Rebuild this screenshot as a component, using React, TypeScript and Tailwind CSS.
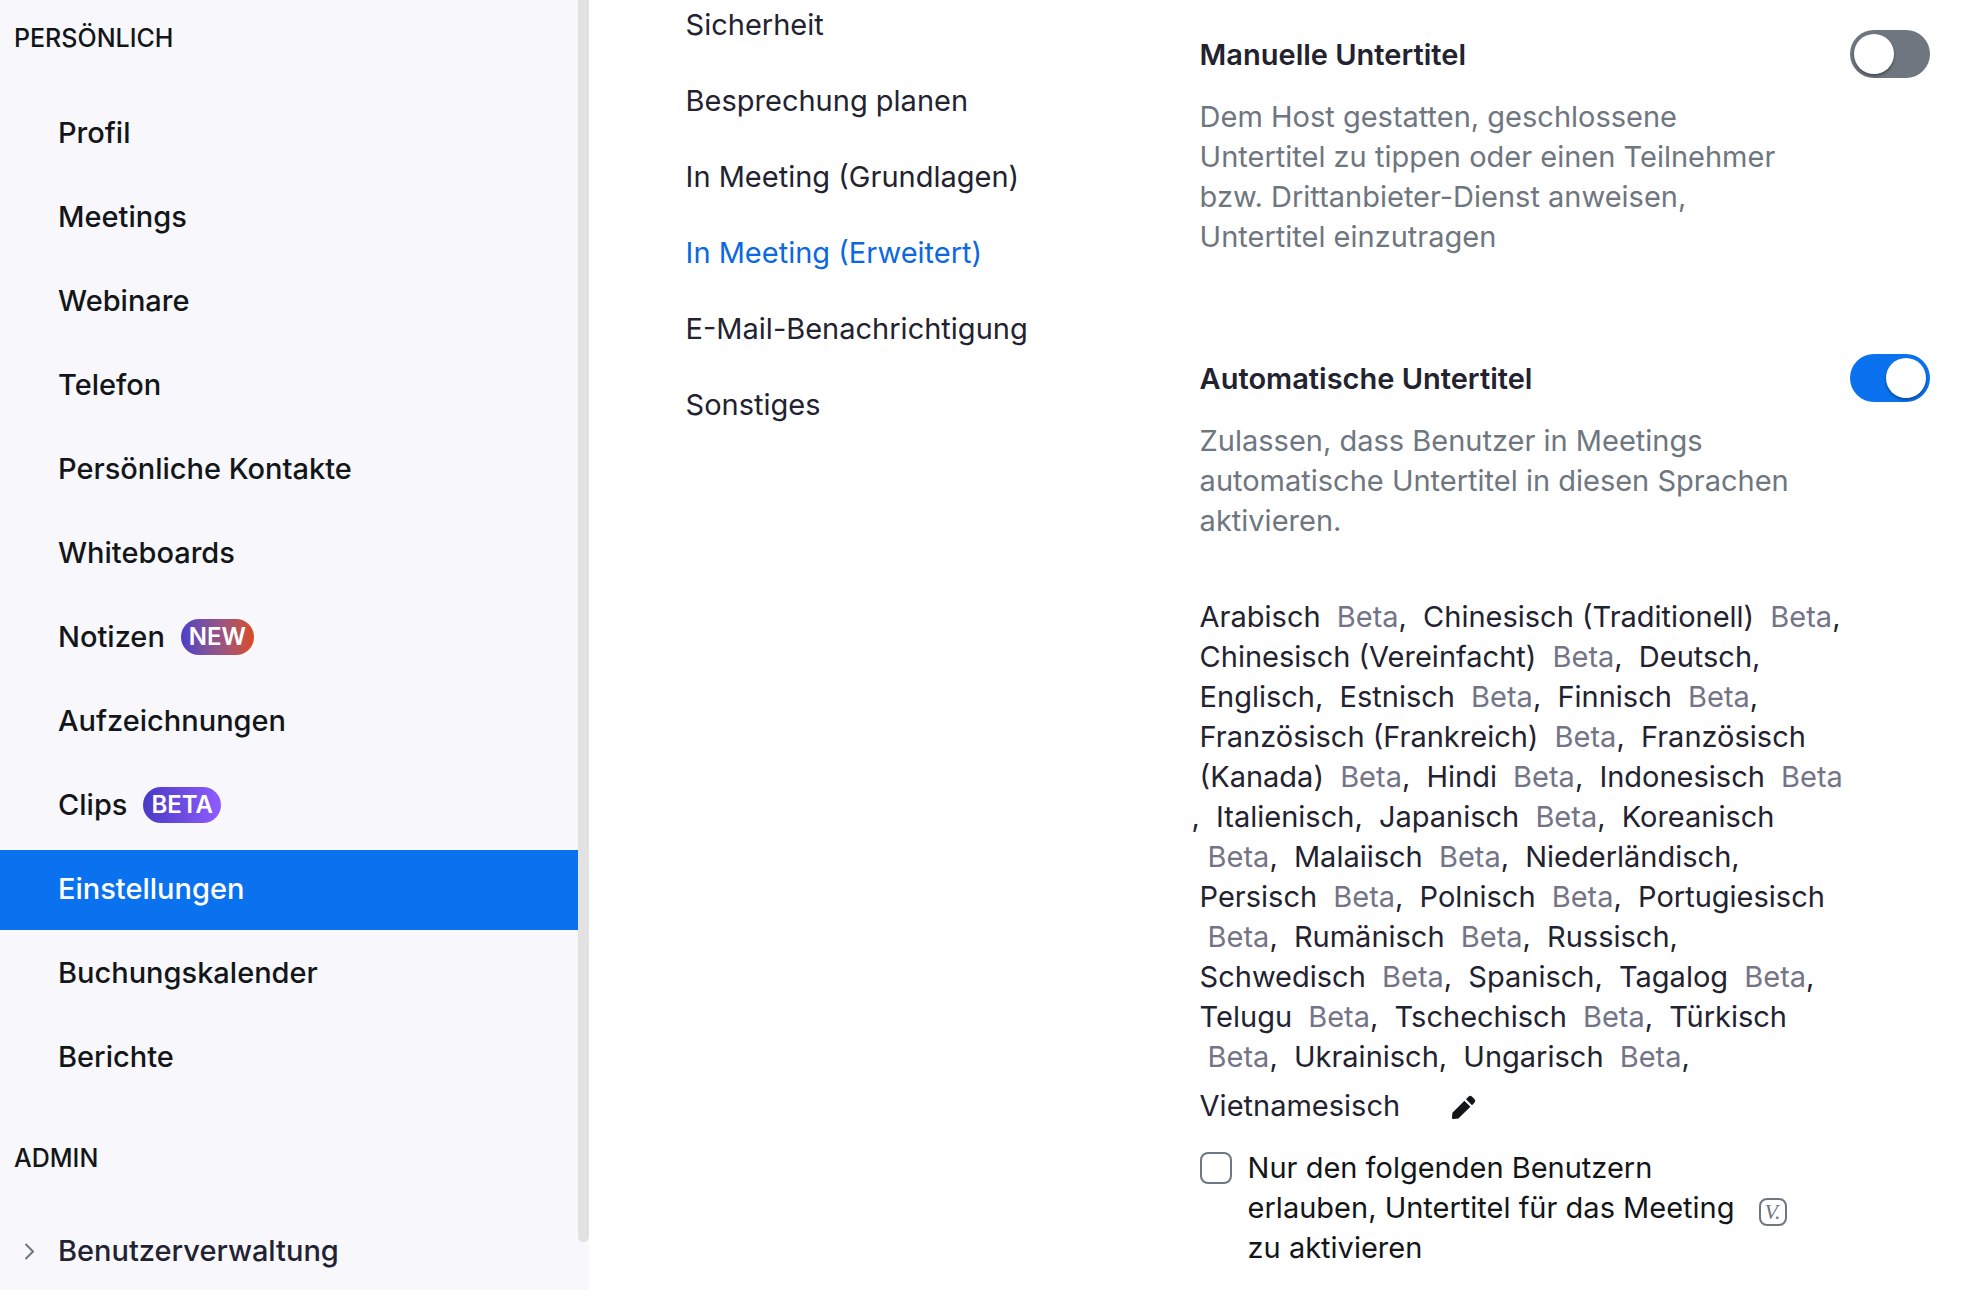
import React, { useState } from "react";
import clsx from "clsx";

interface NavItem {
  label: string;
  badge?: "new" | "beta";
}

interface Language {
  name: string;
  beta?: boolean;
}

const personalItems: NavItem[] = [
  { label: "Profil" },
  { label: "Meetings" },
  { label: "Webinare" },
  { label: "Telefon" },
  { label: "Persönliche Kontakte" },
  { label: "Whiteboards" },
  { label: "Notizen", badge: "new" },
  { label: "Aufzeichnungen" },
  { label: "Clips", badge: "beta" },
  { label: "Einstellungen" },
  { label: "Buchungskalender" },
  { label: "Berichte" },
];

const sections = [
  "Sicherheit",
  "Besprechung planen",
  "In Meeting (Grundlagen)",
  "In Meeting (Erweitert)",
  "E-Mail-Benachrichtigung",
  "Sonstiges",
];

const Badge: React.FC<{ kind: "new" | "beta" }> = ({ kind }) => (
  <span
    className={clsx(
      "ml-4 flex h-9 items-center rounded-full px-2 text-2xl font-semibold text-white",
      kind === "new"
        ? "bg-linear-to-r from-[#4f3cc9] to-[#d9481c]"
        : "bg-linear-to-r from-[#4a3ac4] to-[#8f5cff]"
    )}
  >
    {kind === "new" ? "NEW" : "BETA"}
  </span>
);

const Sidebar: React.FC = () => (
  <aside className="flex w-[30%] shrink-0 bg-[#f7f7fc] text-[#131619]">
    <nav className="min-w-0 flex-1 font-medium">
      <h2 className="px-3.5 pt-[18px] text-[25px] leading-10">PERSÖNLICH</h2>
      <ul className="mt-9 flex flex-col gap-1">
        {personalItems.map((item) => (
          <li key={item.label}>
            <a
              href="#"
              className={clsx(
                "flex h-20 items-center pb-0.5 pl-[58px]",
                item.label === "Einstellungen" && "bg-[#0b72ef] text-white"
              )}
            >
              {item.label}
              {item.badge && <Badge kind={item.badge} />}
            </a>
          </li>
        ))}
      </ul>
      <h2 className="mt-10 px-3.5 text-[25px] leading-10">ADMIN</h2>
      <button type="button" className="mt-9 flex h-[74px] w-full items-center text-[#222230]">
        <svg className="ml-6 mr-6 h-5 w-2.5" viewBox="0 0 10 20" fill="none" stroke="#6e7680" strokeWidth="2">
          <path d="M1.5 3 9 10.5 1.5 18" />
        </svg>
        Benutzerverwaltung
      </button>
    </nav>
    <div className="w-[11px] pb-12">
      <div className="h-full rounded-b-full bg-[#e2e2e3]" />
    </div>
  </aside>
);

const Toggle: React.FC<{ id: string; on: boolean; onChange: (v: boolean) => void }> = ({ id, on, onChange }) => (
  <button
    type="button"
    role="switch"
    aria-checked={on}
    aria-labelledby={id}
    onClick={() => onChange(!on)}
    className={clsx(
      "flex h-12 w-20 shrink-0 items-center rounded-full px-1 transition-colors",
      on ? "justify-end bg-[#0b72ef]" : "justify-start bg-[#6e7680]"
    )}
  >
    <span className="h-10 w-10 rounded-full bg-white shadow-[0_2px_3px_rgba(0,0,0,0.35)]" />
  </button>
);

const languageLines: Language[][] = [
  [{ name: "Arabisch", beta: true }, { name: "Chinesisch (Traditionell)", beta: true }],
  [{ name: "Chinesisch (Vereinfacht)", beta: true }, { name: "Deutsch" }],
  [{ name: "Englisch" }, { name: "Estnisch", beta: true }, { name: "Finnisch", beta: true }],
];

const Beta = () => <span className="ml-2 text-[#747487]">Beta</span>;

const Item: React.FC<Language> = ({ name, beta }) => (
  <span className="mr-2">
    {name}
    {beta && name && " "}
    {beta && <Beta />},
  </span>
);

const LanguageList: React.FC = () => (
  <div className="mt-14 whitespace-nowrap leading-10 text-[#222230]">
    {languageLines.map((line, i) => (
      <p key={i}>
        {line.map((lang) => (
          <React.Fragment key={lang.name}>
            <Item {...lang} />{" "}
          </React.Fragment>
        ))}
      </p>
    ))}
    <p><Item name="Französisch (Frankreich)" beta /> Französisch</p>
    <p><Item name="(Kanada)" beta /> <Item name="Hindi" beta /> Indonesisch <Beta /></p>
    <p><span className="-ml-2 mr-2">,</span> <Item name="Italienisch" /> <Item name="Japanisch" beta /> Koreanisch</p>
    <p><Item name="" beta /> <Item name="Malaiisch" beta /> <Item name="Niederländisch" /></p>
    <p><Item name="Persisch" beta /> <Item name="Polnisch" beta /> Portugiesisch</p>
    <p><Item name="" beta /> <Item name="Rumänisch" beta /> <Item name="Russisch" /></p>
    <p><Item name="Schwedisch" beta /> <Item name="Spanisch" /> <Item name="Tagalog" beta /></p>
    <p><Item name="Telugu" beta /> <Item name="Tschechisch" beta /> Türkisch</p>
    <p><Item name="" beta /> <Item name="Ukrainisch" /> <Item name="Ungarisch" beta /></p>
    <div className="mt-[9px] flex items-center">
      Vietnamesisch
      <button type="button" aria-label="Bearbeiten" className="ml-[50px]">
        <svg className="h-7 w-7" viewBox="0 0 28 28" fill="#131619">
          <path d="M2.4 20.8 14.4 8.8l6 6L8.4 26.4 3.4 27a1.2 1.2 0 0 1-1.4-1.4z" />
          <path d="m16 7.2 2.4-2.4a2.6 2.6 0 0 1 3.7 0l2.3 2.3a2.6 2.6 0 0 1 0 3.7L22 13.2z" />
        </svg>
      </button>
    </div>
  </div>
);

export default function App() {
  const [manual, setManual] = useState(false);
  const [auto, setAuto] = useState(true);

  return (
    <div className="flex min-h-screen overflow-hidden bg-white font-[Inter,sans-serif] text-[29px] text-[#222230]">
      <Sidebar />
      <nav className="w-[611px] shrink-0 pl-[97px] pt-[5px]">
        <ul className="flex flex-col gap-9 leading-10">
          {sections.map((section) => (
            <li key={section}>
              <a href="#" className={clsx(section === "In Meeting (Erweitert)" && "text-[#0b68e0]")}>
                {section}
              </a>
            </li>
          ))}
        </ul>
      </nav>
      <main className="min-w-0 flex-1 pr-8 pt-[30px] leading-10">
        <section>
          <div className="flex items-center justify-between">
            <h3 id="manual" className="pt-0.5 font-semibold">Manuelle Untertitel</h3>
            <Toggle id="manual" on={manual} onChange={setManual} />
          </div>
          <p className="mt-[19px] text-[#6e7680]">
            Dem Host gestatten, geschlossene
            <br />
            Untertitel zu tippen oder einen Teilnehmer
            <br />
            bzw. Drittanbieter-Dienst anweisen,
            <br />
            Untertitel einzutragen
          </p>
        </section>
        <section className="mt-[97px]">
          <div className="flex items-center justify-between">
            <h3 id="auto" className="pt-0.5 font-semibold">Automatische Untertitel</h3>
            <Toggle id="auto" on={auto} onChange={setAuto} />
          </div>
          <p className="mt-[19px] text-[#6e7680]">
            Zulassen, dass Benutzer in Meetings
            <br />
            automatische Untertitel in diesen Sprachen
            <br />
            aktivieren.
          </p>
          <LanguageList />
          <div className="mt-[22px] flex items-start text-[#131619]">
            <input
              id="restrict"
              type="checkbox"
              className="mt-1 h-8 w-8 shrink-0 appearance-none rounded-lg border-2 border-[#6e7680] bg-white checked:bg-[#0b72ef]"
            />
            <label htmlFor="restrict" className="ml-4">
              Nur den folgenden Benutzern
              <br />
              erlauben, Untertitel für das Meeting
              <br />
              zu aktivieren
            </label>
            <span className="ml-6 mt-[50px] flex h-7 w-7 items-center justify-center rounded-lg border-2 border-[#6e7680] font-['Liberation_Serif',serif] text-[22px] italic text-[#6e7680]">
              V.
            </span>
          </div>
        </section>
      </main>
    </div>
  );
}
